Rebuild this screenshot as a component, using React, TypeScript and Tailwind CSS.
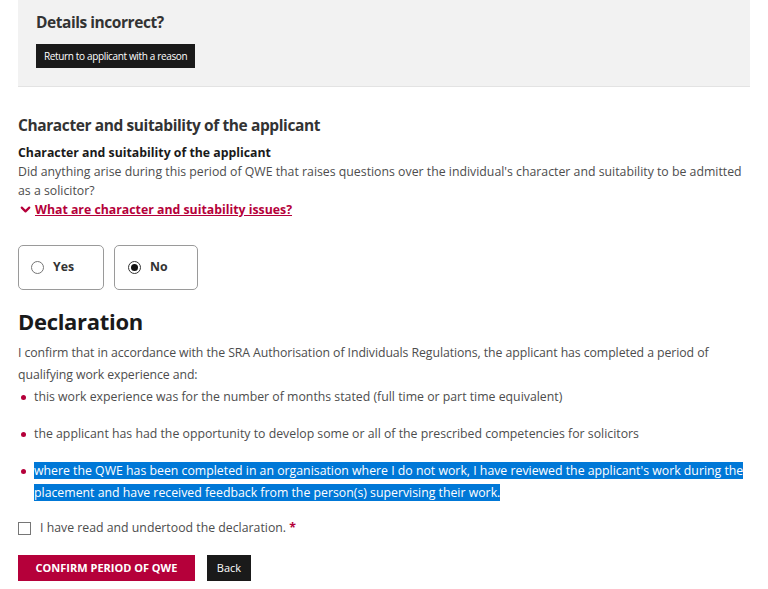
import { ChevronDown } from 'lucide-react';

const Bullet = ({ children }: { children: React.ReactNode }) => (
  <li className="flex gap-[8px]">
    <span className="mt-[9px] ml-[3px] h-[5px] w-[5px] shrink-0 rounded-full bg-[#b5003a]" />
    <span>{children}</span>
  </li>
);

const App = () => {
  return (
    <div className="min-h-[589px] bg-white px-[18px] font-['Open_Sans',sans-serif] text-[12.3px] text-[#4d4d4d]">
      <div className="h-[87px] border-b border-[#e3e3e3] bg-[#f2f2f2] px-[18px] pt-[10px]">
        <h2 className="text-[15.5px] font-bold leading-[24px] tracking-[-0.45px] text-[#333]">Details incorrect?</h2>
        <button className="mt-[10px] h-[24px] bg-[#1a1a1a] px-[8px] text-[10px] tracking-[-0.35px] text-white">
          Return to applicant with a reason
        </button>
      </div>

      <h2 className="mt-[26px] text-[15.5px] font-bold leading-[24px] tracking-[-0.4px] text-[#333]">
        Character and suitability of the applicant
      </h2>
      <p className="mt-[7px] font-bold leading-[18px] text-[#1a1a1a]">Character and suitability of the applicant</p>
      <p className="leading-[19px]">
        Did anything arise during this period of QWE that raises questions over the individual's character and
        suitability to be admitted as a solicitor?
      </p>
      <a href="#" className="flex items-center gap-[2px] font-bold leading-[19px] text-[#b5003a] underline">
        <ChevronDown size={15} strokeWidth={3.5} />
        What are character and suitability issues?
      </a>

      <div className="mt-[26px] flex gap-[10px]">
        <label className="flex h-[45px] w-[86px] items-center gap-[9px] rounded-[5px] border border-[#9a9a9a] pl-[12px] font-bold text-[#333]">
          <span className="h-[13px] w-[13px] rounded-full border border-[#767676] bg-white" />
          Yes
        </label>
        <label className="flex h-[45px] w-[84px] items-center gap-[9px] rounded-[5px] border border-[#9a9a9a] pl-[13px] font-bold text-[#333]">
          <span className="flex h-[13px] w-[13px] items-center justify-center rounded-full border border-[#333] bg-white">
            <span className="h-[7px] w-[7px] rounded-full bg-[#111]" />
          </span>
          No
        </label>
      </div>

      <h2 className="mt-[16px] text-[22px] font-bold leading-[30px] tracking-[-0.3px] text-[#1a1a1a]">Declaration</h2>
      <p className="mt-[6px] leading-[22px] tracking-[-0.08px]">
        I confirm that in accordance with the SRA Authorisation of Individuals Regulations, the applicant has completed
        a period of qualifying work experience and:
      </p>
      <ul className="flex flex-col gap-[15px] leading-[22px]">
        <Bullet>this work experience was for the number of months stated (full time or part time equivalent)</Bullet>
        <Bullet>the applicant has had the opportunity to develop some or all of the prescribed competencies for solicitors</Bullet>
        <Bullet>
          <span className="bg-[#0078d7] text-white">
            where the QWE has been completed in an organisation where I do not work, I have reviewed the applicant's
            work during the placement and have received feedback from the person(s) supervising their work.
          </span>
        </Bullet>
      </ul>

      <label className="mt-[13px] flex items-center gap-[9px] leading-[22px]">
        <span className="h-[13px] w-[13px] border border-[#767676] bg-white" />
        <span>
          I have read and undertood the declaration. <span className="font-bold text-[#b5003a]">*</span>
        </span>
      </label>

      <div className="mt-[16px] flex gap-[12px]">
        <button className="h-[26px] w-[177px] bg-[#b5003a] text-[11px] font-bold text-white uppercase">
          Confirm period of QWE
        </button>
        <button className="h-[26px] w-[44px] bg-[#1a1a1a] text-[11px] text-white">Back</button>
      </div>
    </div>
  );
};

export default App;
